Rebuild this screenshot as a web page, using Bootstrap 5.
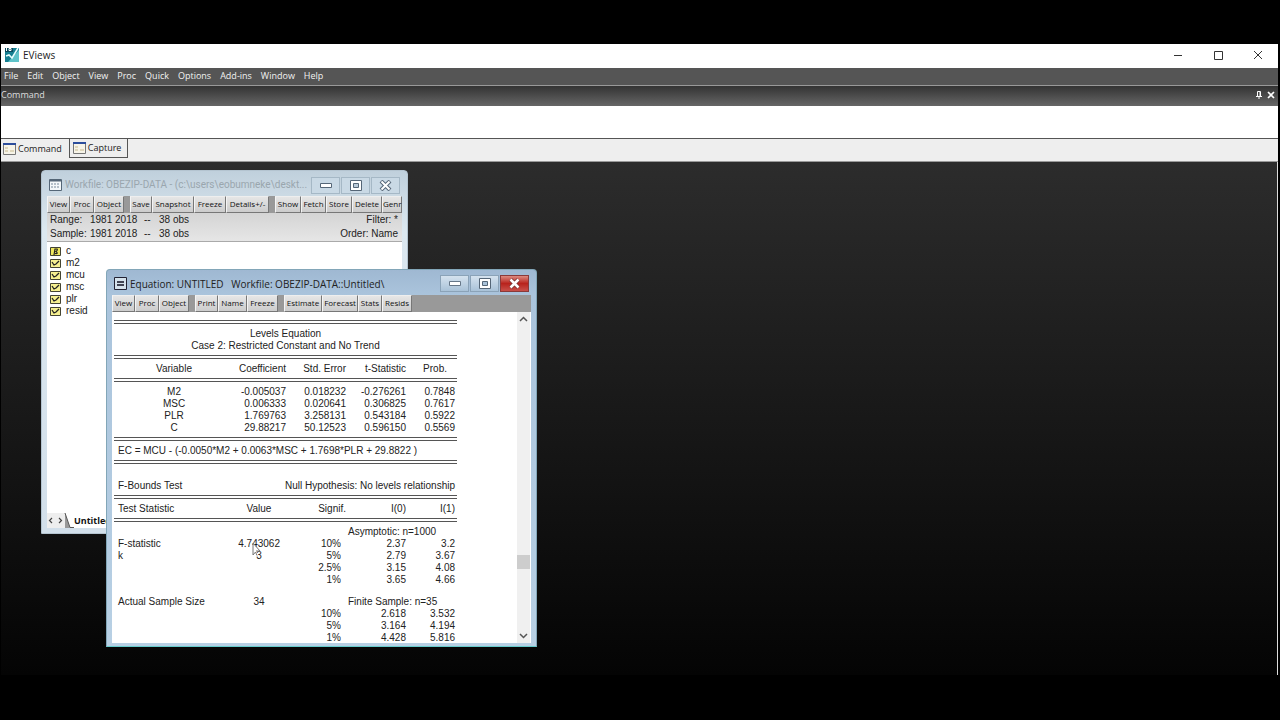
<!DOCTYPE html>
<html lang="en">
<head>
<meta charset="utf-8">
<meta name="viewport" content="width=device-width, initial-scale=1">
<title>EViews</title>
<link href="https://cdn.jsdelivr.net/npm/bootstrap@5.3.0/dist/css/bootstrap.min.css" rel="stylesheet">
<style>
  :root { --ui: "Open Sans", "Noto Sans", sans-serif; --data: "Liberation Sans", Arial, sans-serif; }
  body { background: #000; padding: 44px 2px 45px 1px; font: 10px/12px var(--ui); color: #222; }
  button { font: inherit; color: inherit; padding: 0; border: 0; background: none; }
  svg { display: block; flex: none; }
  .app-shell { min-height: calc(100vh - 89px); }
  .app-title { height: 24px; background: #fff; padding: 0 0 2px 4px; }
  .app-title .caption-btn { width: 40px; height: 22px; }
  .menu-strip { height: 18px; background: #555; gap: 9px; padding: 0 0 1px 3px; font-size: 9px; border-bottom: 1px solid #999; }
  .menu-strip a { color: #f2f2f2; text-decoration: none; }
  .pane-title { height: 20px; background: linear-gradient(#333, #666); color: #ddd; font-size: 9px; padding: 0 3px 2px 0; }
  .cmd-input { height: 32px; border: 0; border-radius: 0; background: #fff; resize: none; width: 100%; display: block; outline: 0; }
  .pane-tabs { height: 24px; background: #eee; border-top: 1px solid #555; border-bottom: 1px solid #999; font-size: 9px; }
  .pane-tabs button { height: 19px; gap: 2px; padding: 0 7px 0 2px; border-right: 1px solid #555; }
  .pane-tabs button + button { border-bottom: 1px solid #555; padding: 0 6px 0 3px; }
  .desk { background: linear-gradient(#2c2c2c, #040404); border-right: 1px solid #ddd; min-height: 490px; }
  .mdi { position: absolute; border-radius: 4px 4px 0 0; padding: 0 5px 3px; }
  .mdi-work { left: 40px; top: 8px; width: 367px; height: 364px; padding-bottom: 5px; background: linear-gradient(#c0d0dc, #dce8f0 60px, #d2dfea); border: 1px solid #b4c4d0; }
  .mdi-eq { left: 105px; top: 107px; width: 431px; height: 378px; background: linear-gradient(#9fb8d2, #aac4dc 25px, #b8d0e4); border: 1px solid #82a6b8; border-bottom-color: #6cc; }
  .mdi-head { height: 25px; padding: 3px 2px 0 2px; gap: 3px; }
  .mdi-work .mdi-head { color: #9aa6ae; gap: 3px; font-family: Roboto, var(--ui); }
  .caps { gap: 1px; }
  .mdi-head .cap { width: 29px; height: 17px; border: 1px solid #8ba3b8; background: linear-gradient(#d5e2ee, #a9c2d8); }
  .mdi-work .cap { background: #c9d9e5; border-color: #a5b8c6; }
  .mdi-head .cap.shut { background: linear-gradient(#dc8a80, #b8231d 50%, #c8504a); border-color: #8a3a3a; }
  .mdi-work .mdi-head .cap.shut { background: #c9d9e5; border-color: #a5b8c6; }
  .tools { display: grid; background: #999; height: 17px; font-size: 8px; overflow: hidden; }
  .tools button { background: linear-gradient(#e6e6e6, #ccc); border: 1px solid #777; border-left-color: #f4f4f4; border-top-color: #eee; white-space: nowrap; color: #111; line-height: 14px; padding-bottom: 1px; }
  .tools-work { grid-template-columns: 23px 24px 30px 6px 22px 42px 32px 43px 6px 26px 25px 26px 30px 20px; }
  .tools-eq { grid-template-columns: 23px 24px 30px 6px 23px 29px 31px 6px 38px 36px 24px 30px; }
  .info { height: 29px; background: linear-gradient(#d4d4d4, #e6e6e6); border-bottom: 1px solid #aaa; font: 10px/14px var(--data); padding: 0 4px 0 3px; }
  .info-line { display: grid; grid-template-columns: 40px 54px 15px 1fr auto; }
  .white-pane { background: #fff; font-family: var(--data); min-height: 0; }
  .objects { padding: 3px 3px; line-height: 12px; }
  .objects li { gap: 5px; height: 12px; }
  .sheet-tabs { height: 16px; font: 700 9px/15px var(--ui); color: #111; }
  .report { width: 343px; margin: 5px 0 0 2px; font: 10px/12px var(--data); color: #222; table-layout: fixed; border-collapse: collapse; }
  .report + .report { margin-top: 0; }
  .report td, .report th { padding: 0; height: 12px; font-weight: 400; text-align: right; white-space: nowrap; }
  .report .mid { text-align: center; }
  .report .lead-cell { text-align: left; padding-left: 4px; }
  .report tr > :last-child:not([colspan="5"]) { padding-right: 2px; }
  .report .rule td { height: 11px; line-height: 5px; }
  .report .gap td { height: 10px; line-height: 5px; }
  .report .rule i { display: block; height: 4px; border: solid #555; border-width: 1px 0; }
  .report .num { padding-right: 6px; }
  .report .signif { padding-right: 1px; }
  .report .prob { padding-right: 10px !important; }
  .report .from-left { text-align: left; padding-left: 1px; }
  .scroller { width: 13px; background: #f0f0f0; margin-right: 1px; padding: 4px 0; }
  .thumb { height: 14px; background: #cdcdcd; }
  .pointer { position: absolute; left: 143px; top: 272px; }
</style>
</head>
<body>
<div class="app-shell d-flex flex-column">
  <header class="app-title d-flex align-items-center">
    <svg width="14" height="14" viewBox="0 0 14 14"><path fill="#167f91" d="M0 0h14v14H0z"/><path fill="#0a4a5c" d="M0 0h8v4H0z"/><path fill="#5fc3c9" d="M3 14 14 2v12z"/><path d="m1 8 3-1 3 3 6-10" stroke="#e8ffff" stroke-width="1.600" fill="none"/><path d="M1.500 0v3M4 .5h2v2H4z" stroke="#fff" fill="none"/></svg>
    <span class="ms-1">EViews</span>
    <button class="caption-btn ms-auto d-flex align-items-center justify-content-center" aria-label="Minimize"><svg width="10" height="10"><path d="M1 5.500h8" stroke="#333"/></svg></button>
    <button class="caption-btn d-flex align-items-center justify-content-center" aria-label="Maximize"><svg width="10" height="10"><path d="M1.500 1.500h8v8h-8z" fill="none" stroke="#333"/></svg></button>
    <button class="caption-btn d-flex align-items-center justify-content-center" aria-label="Close"><svg width="10" height="10"><path d="m1 1 8 8m0-8-8 8" stroke="#333"/></svg></button>
  </header>
  <nav class="menu-strip d-flex align-items-center">
    <a href="#">File</a><a href="#">Edit</a><a href="#">Object</a><a href="#">View</a><a href="#">Proc</a><a href="#">Quick</a><a href="#">Options</a><a href="#">Add-ins</a><a href="#">Window</a><a href="#">Help</a>
  </nav>
  <div class="pane-title d-flex align-items-center">
    <span class="me-auto">Command</span>
    <button class="me-1" aria-label="Pin"><svg width="8" height="8"><path d="M2.500 5V.5h3V5M1 5.500h6M4 6v2M5 1v4" stroke="#fff" fill="none"/></svg></button>
    <button aria-label="Close pane"><svg width="8" height="8"><path d="m1 1 6 6m0-6L1 7" stroke="#fff" stroke-width="1.700"/></svg></button>
  </div>
  <textarea class="cmd-input" aria-label="Command"></textarea>
  <div class="pane-tabs d-flex">
    <button class="d-flex align-items-center"><svg width="13" height="12"><path d="M.5.5h12v11H.5z" fill="#f7f4e8" stroke="#777"/><path d="M0 1h13" stroke="#2c4d9c" stroke-width="2"/><path d="M2 5h3M2 8h3M7 8h4" stroke="#c8b98e"/></svg>Command</button>
    <button class="d-flex align-items-center"><svg width="13" height="12"><path d="M.5.5h12v11H.5z" fill="#f7f4e8" stroke="#777"/><path d="M0 1h13" stroke="#2c4d9c" stroke-width="2"/><path d="M2 5h3M2 8h3M7 8h4" stroke="#c8b98e"/></svg>Capture</button>
  </div>

  <main class="desk flex-grow-1 position-relative">
    <section class="mdi mdi-work d-flex flex-column">
      <div class="mdi-head d-flex align-items-center">
        <svg width="13" height="12"><path d="M.5.5h12v11H.5z" fill="#f4f8fa" stroke="#567"/><path d="M1 1.500h11" stroke="#567" stroke-width="2"/><path d="M2 5h9M2 8h9" stroke="#789" stroke-dasharray="2 1"/></svg>
        <span class="text-nowrap me-auto">Workfile: OBEZIP-DATA - (c:\users\eobumneke\deskt...</span>
        <div class="caps d-flex flex-shrink-0">
          <button class="cap d-flex align-items-center justify-content-center" aria-label="Minimize workfile"><svg width="12" height="5"><path d="M.5.5h11v4H.5z" fill="#fff" stroke="#567"/></svg></button>
          <button class="cap d-flex align-items-center justify-content-center" aria-label="Maximize workfile"><svg width="12" height="11"><path d="M.5.5h11v10H.5z" fill="#fff" stroke="#567"/><path d="M3.500 3.500h5v4h-5z" fill="#b9cad8" stroke="#567"/></svg></button>
          <button class="cap shut d-flex align-items-center justify-content-center" aria-label="Close workfile"><svg width="13" height="11"><path d="m2 1 9 9m0-9-9 9" stroke="#567" stroke-width="4"/><path d="m2.500 1.500 8 8m0-8-8 8" stroke="#fff" stroke-width="2"/></svg></button>
        </div>
      </div>
      <div class="tools tools-work">
        <button>View</button><button>Proc</button><button>Object</button><span></span><button>Save</button><button>Snapshot</button><button>Freeze</button><button>Details+/-</button><span></span><button>Show</button><button>Fetch</button><button>Store</button><button>Delete</button><button>Genr</button>
      </div>
      <div class="info">
        <div class="info-line"><span>Range:</span><span>1981 2018</span><span>--</span><span>38 obs</span><span>Filter: *</span></div>
        <div class="info-line"><span>Sample:</span><span>1981 2018</span><span>--</span><span>38 obs</span><span>Order: Name</span></div>
      </div>
      <div class="white-pane flex-grow-1 d-flex flex-column">
        <svg width="0" height="0" class="position-absolute"><symbol id="series" viewBox="0 0 11 9"><path d="M.5.500h10v8H.5z" fill="#f6f090" stroke="#443"/><path d="m2 3 2 3 2-1 3-3" stroke="#222" stroke-width="1.300" fill="none"/></symbol></svg>
        <ul class="objects list-unstyled mb-auto">
          <li class="d-flex align-items-center"><svg width="11" height="9"><path d="M.5.500h10v8H.5z" fill="#f0e860" stroke="#443"/><path d="M4 8 5 2h2q1 1-1 2.500Q9 7 5 6.500" stroke="#222" stroke-width="1.200" fill="none"/></svg>c</li>
          <li class="d-flex align-items-center"><svg width="11" height="9"><use href="#series"/></svg>m2</li>
          <li class="d-flex align-items-center"><svg width="11" height="9"><use href="#series"/></svg>mcu</li>
          <li class="d-flex align-items-center"><svg width="11" height="9"><use href="#series"/></svg>msc</li>
          <li class="d-flex align-items-center"><svg width="11" height="9"><use href="#series"/></svg>plr</li>
          <li class="d-flex align-items-center"><svg width="11" height="9"><use href="#series"/></svg>resid</li>
        </ul>
        <div class="sheet-tabs d-flex align-items-center">
          <svg width="27" height="15"><path d="M0 0h18v15H0z" fill="#eee"/><path d="M5 5 2.500 7.500 5 10M12 5l2.500 2.500L12 10" stroke="#444" stroke-width="1.200" fill="none"/><path d="M18 0v15h5z" fill="#999"/><path d="m18 0 5 14.500h4" stroke="#555" fill="none"/></svg>
          <span>Untitled</span>
        </div>
      </div>
    </section>

    <section class="mdi mdi-eq d-flex flex-column">
      <div class="mdi-head d-flex align-items-center">
        <svg width="13" height="13"><path d="M.5.500h12v12H.5z" fill="#d5e2ec" stroke="#223"/><path d="M3 5h7M3 8h7" stroke="#112" stroke-width="1.600"/></svg>
        <span class="me-auto text-nowrap">Equation: UNTITLED&nbsp;&nbsp; Workfile: OBEZIP-DATA::Untitled\</span>
        <div class="caps d-flex flex-shrink-0">
          <button class="cap d-flex align-items-center justify-content-center" aria-label="Minimize equation"><svg width="12" height="5"><path d="M.5.5h11v4H.5z" fill="#fff" stroke="#678"/></svg></button>
          <button class="cap d-flex align-items-center justify-content-center" aria-label="Maximize equation"><svg width="12" height="11"><path d="M.5.5h11v10H.5z" fill="#fff" stroke="#567"/><path d="M3.500 3.500h5v4h-5z" fill="#a9c2d8" stroke="#567"/></svg></button>
          <button class="cap shut d-flex align-items-center justify-content-center" aria-label="Close equation"><svg width="13" height="11"><path d="m2.500 1.500 8 8m0-8-8 8" stroke="#733" stroke-width="4"/><path d="m2.500 1.500 8 8m0-8-8 8" stroke="#fff" stroke-width="2.500"/></svg></button>
        </div>
      </div>
      <div class="tools tools-eq">
        <button>View</button><button>Proc</button><button>Object</button><span></span><button>Print</button><button>Name</button><button>Freeze</button><span></span><button>Estimate</button><button>Forecast</button><button>Stats</button><button>Resids</button>
      </div>
      <div class="white-pane flex-grow-1 d-flex overflow-hidden">
        <div class="flex-grow-1 overflow-hidden">
          <table class="report">
            <colgroup><col style="width:120px"><col style="width:52px"><col style="width:60px"><col style="width:60px"><col style="width:51px"></colgroup>
            <tbody>
            <tr class="rule"><td colspan="5"><i></i></td></tr>
            <tr><td colspan="5" class="mid">Levels Equation</td></tr>
            <tr><td colspan="5" class="mid">Case 2: Restricted Constant and No Trend</td></tr>
            <tr class="rule"><td colspan="5"><i></i></td></tr>
            <tr><th class="mid">Variable</th><th>Coefficient</th><th>Std. Error</th><th>t-Statistic</th><th class="prob">Prob.</th></tr>
            <tr class="rule"><td colspan="5"><i></i></td></tr>
            <tr><td class="mid">M2</td><td>-0.005037</td><td>0.018232</td><td>-0.276261</td><td>0.7848</td></tr>
            <tr><td class="mid">MSC</td><td>0.006333</td><td>0.020641</td><td>0.306825</td><td>0.7617</td></tr>
            <tr><td class="mid">PLR</td><td>1.769763</td><td>3.258131</td><td>0.543184</td><td>0.5922</td></tr>
            <tr><td class="mid">C</td><td>29.88217</td><td>50.12523</td><td>0.596150</td><td>0.5569</td></tr>
            <tr class="rule"><td colspan="5"><i></i></td></tr>
            <tr><td colspan="5" class="lead-cell">EC = MCU - (-0.0050*M2 + 0.0063*MSC + 1.7698*PLR + 29.8822 )</td></tr>
            <tr class="rule"><td colspan="5"><i></i></td></tr>
            <tr><td colspan="5"></td></tr>
            </tbody>
          </table>
          <table class="report">
            <colgroup><col style="width:118px"><col style="width:54px"><col style="width:61px"><col style="width:59px"><col style="width:51px"></colgroup>
            <tbody>
            <tr><td class="lead-cell">F-Bounds Test</td><td colspan="4">Null Hypothesis: No levels relationship</td></tr>
            <tr class="rule"><td colspan="5"><i></i></td></tr>
            <tr><th class="lead-cell">Test Statistic</th><th class="mid">Value</th><th class="signif">Signif.</th><th>I(0)</th><th>I(1)</th></tr>
            <tr class="rule"><td colspan="5"><i></i></td></tr>
            <tr><td></td><td></td><td></td><td colspan="2" class="from-left">Asymptotic: n=1000</td></tr>
            <tr><td class="lead-cell">F-statistic</td><td class="num">4.743062</td><td class="num">10%</td><td>2.37</td><td>3.2</td></tr>
            <tr><td class="lead-cell">k</td><td class="mid">3</td><td class="num">5%</td><td>2.79</td><td>3.67</td></tr>
            <tr><td></td><td></td><td class="num">2.5%</td><td>3.15</td><td>4.08</td></tr>
            <tr><td></td><td></td><td class="num">1%</td><td>3.65</td><td>4.66</td></tr>
            <tr class="gap"><td colspan="5"></td></tr>
            <tr><td class="lead-cell">Actual Sample Size</td><td class="mid">34</td><td></td><td colspan="2" class="from-left">Finite Sample: n=35</td></tr>
            <tr><td></td><td></td><td class="num">10%</td><td>2.618</td><td>3.532</td></tr>
            <tr><td></td><td></td><td class="num">5%</td><td>3.164</td><td>4.194</td></tr>
            <tr><td></td><td></td><td class="num">1%</td><td>4.428</td><td>5.816</td></tr>
            </tbody>
          </table>
        </div>
        <div class="scroller d-flex flex-column align-items-stretch">
          <svg class="mx-auto" width="9" height="6"><path d="m1 5 3.500-3.500L8 5" stroke="#555" stroke-width="1.500" fill="none"/></svg>
          <div style="flex:230"></div><div class="thumb"></div><div style="flex:63"></div>
          <svg class="mx-auto" width="9" height="6"><path d="m1 1 3.500 3.500L8 1" stroke="#555" stroke-width="1.500" fill="none"/></svg>
        </div>
      </div>
      <svg class="pointer" width="11" height="15" viewBox="0 0 11 15"><path d="M3 1v12l2.500-3 1.500 3.500M3 1l7 8H6" fill="#fff" fill-opacity=".7" stroke="#777"/></svg>
    </section>
  </main>
</div>
<script src="https://cdn.jsdelivr.net/npm/bootstrap@5.3.0/dist/js/bootstrap.bundle.min.js"></script>
</body>
</html>
